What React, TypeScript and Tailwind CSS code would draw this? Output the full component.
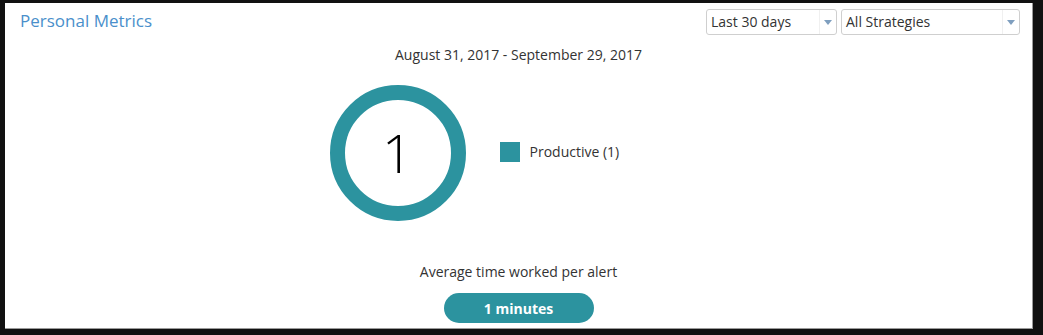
import React from "react";

function Select({ label, width }: { label: string; width: string }) {
  return (
    <div
      className={`${width} h-[26px] flex items-center border border-[#cfcfcf] rounded-[3px] bg-white shrink-0`}
    >
      <span className="flex-1 pl-[4px] text-[14px] text-[#333] leading-[20px] whitespace-nowrap overflow-hidden">{label}</span>
      <div className="w-[17px] h-full flex items-center justify-center border-l border-[#f0f0f0]">
        <svg width="8" height="5" viewBox="0 0 8 5">
          <path d="M0 0 L8 0 L4 5 Z" fill="#7f9fbf" />
        </svg>
      </div>
    </div>
  );
}

export default function App() {
  return (
    <div
      className="w-[1043px] h-[335px] bg-[#111111] pt-[3px] pl-[5px]"
      style={{ fontFamily: "'Open Sans', 'Noto Sans', sans-serif" }}
    >
      <div className="w-[1028px] h-[326px] bg-white border-r border-b border-[#9a9a9a] flex flex-col">
        <div className="flex items-start justify-between pl-[15px] pr-[12px] pt-[6px] shrink-0">
          <div className="text-[17px] text-[#4a8fcb] leading-[20px] pt-[2px]">Personal Metrics</div>
          <div className="flex gap-[4px]">
            <Select label="Last 30 days" width="w-[131px]" />
            <Select label="All Strategies" width="w-[179px]" />
          </div>
        </div>
        <div className="text-center text-[14px] text-[#333] leading-[16px] mt-[12px] shrink-0">
          August 31, 2017 - September 29, 2017
        </div>
        <div className="flex justify-center mt-[22px] shrink-0">
          <div className="w-[378px] flex items-center">
            <div className="w-[136px] h-[136px] shrink-0 rounded-full border-[15px] border-[#2c939f] flex items-center justify-center">
              <span className="text-[54px] text-black leading-none font-light -mt-[2px]">1</span>
            </div>
            <div className="flex items-center ml-[34px] -mt-[2px]">
              <div className="w-[20px] h-[20px] bg-[#2c939f]" />
              <span className="ml-[10px] text-[14px] text-[#333] leading-[20px]">Productive (1)</span>
            </div>
          </div>
        </div>
        <div className="text-center text-[14px] text-[#333] leading-[16px] mt-[43px] shrink-0">
          Average time worked per alert
        </div>
        <div className="flex justify-center mt-[13px] shrink-0">
          <div className="w-[150px] h-[30px] rounded-full bg-[#2c939f] flex items-center justify-center text-white font-bold text-[14px]">
            1 minutes
          </div>
        </div>
      </div>
    </div>
  );
}
